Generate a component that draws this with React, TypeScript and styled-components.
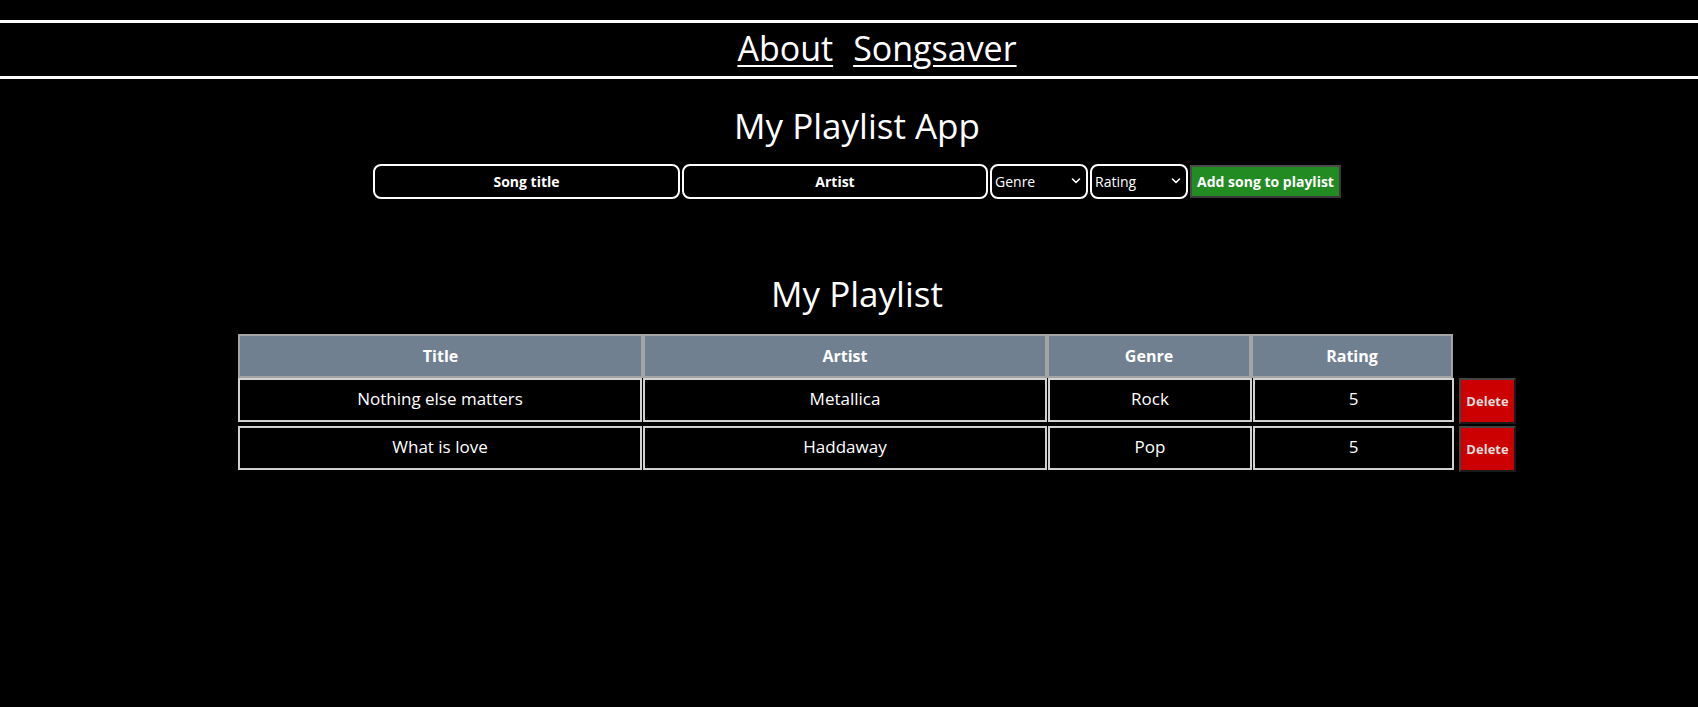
import React from "react";
import styled, { createGlobalStyle } from "styled-components";

const Global = createGlobalStyle`
  html, body { margin: 0; padding: 0; background: #000; }
  body { font-family: "Open Sans", "DejaVu Sans", sans-serif; color: #fff; }
  * { box-sizing: border-box; }
`;

const Page = styled.div`
  min-height: 707px;
  background: #000;
  padding-top: 20px;
  display: flex;
  flex-direction: column;
`;

const Nav = styled.nav`
  border-top: 3px solid #fff;
  border-bottom: 3px solid #fff;
  height: 59px;
  display: flex;
  justify-content: center;
  align-items: center;
  gap: 20px;
  padding-left: 56px;
  padding-bottom: 4px;
`;

const NavLink = styled.a`
  color: #fff;
  font-size: 34px;
  line-height: 40px;
  text-decoration: underline;
  text-decoration-thickness: 2px;
  text-underline-offset: 4px;
`;

const Heading = styled.h1<{ $top: number }>`
  margin: ${(p) => p.$top}px 0 0;
  padding-left: 16px;
  text-align: center;
  font-size: 35px;
  font-weight: 400;
  line-height: 40px;
`;

const Form = styled.form`
  margin-top: 18px;
  display: flex;
  justify-content: center;
  gap: 2px;
  padding-left: 16px;
`;

const TextInput = styled.input<{ $w: number }>`
  width: ${(p) => p.$w}px;
  height: 35px;
  border: 2px solid #fff;
  border-radius: 8px;
  background: #000;
  color: #fff;
  text-align: center;
  font-family: inherit;
  font-size: 14px;
  font-weight: 700;
  outline: none;
  &::placeholder { color: #fff; opacity: 1; }
`;

const SelectWrap = styled.div`
  position: relative;
  width: 98px;
  height: 35px;
`;

const Select = styled.select`
  appearance: none;
  width: 100%;
  height: 100%;
  border: 2px solid #fff;
  border-radius: 8px;
  background: #000;
  color: #fff;
  font-family: inherit;
  font-size: 14px;
  padding: 0 0 0 3px;
  outline: none;
`;

const Chevron = styled.svg`
  position: absolute;
  right: 7px;
  top: 13px;
  width: 10px;
  height: 8px;
  pointer-events: none;
`;

const AddButton = styled.button`
  width: 151px;
  height: 33px;
  margin-top: 1px;
  background: #228b22;
  color: #fff;
  border: 2px solid;
  border-color: #4a4a4a #3a3a3a #3a3a3a #4a4a4a;
  font-family: inherit;
  font-size: 14px;
  font-weight: 700;
  padding: 0;
`;

const TableWrap = styled.div`
  margin-top: 20px;
  display: flex;
  justify-content: center;
  padding-left: 56px;
`;

const Table = styled.div`
  display: flex;
  flex-direction: column;
`;

const Row = styled.div<{ $gap?: number }>`
  display: flex;
  align-items: flex-start;
  margin-top: ${(p) => p.$gap ?? 0}px;
`;

const HeadCell = styled.div<{ $w: number }>`
  width: ${(p) => p.$w}px;
  height: 44px;
  background: #708090;
  border: 2px solid #a4a4a4;
  display: flex;
  align-items: center;
  justify-content: center;
  font-size: 16px;
  font-weight: 700;
`;

const Cell = styled.div<{ $w: number }>`
  width: ${(p) => p.$w}px;
  height: 44px;
  border: 2px solid #d0d0d0;
  margin-right: 1px;
  display: flex;
  align-items: center;
  justify-content: center;
  font-size: 17px;
  padding-bottom: 3px;
`;

const Spacer = styled.div`
  width: 62px;
`;

const DeleteButton = styled.button`
  margin-left: 4px;
  width: 57px;
  height: 46px;
  background: #cc0000;
  color: #dcdcdc;
  border: 2px solid;
  border-color: #444 #1a1a1a #1a1a1a #444;
  font-family: inherit;
  font-size: 13px;
  font-weight: 700;
  padding: 0;
`;

const cols = [404, 404, 204, 202];
const songs = [
  { title: "Nothing else matters", artist: "Metallica", genre: "Rock", rating: 5 },
  { title: "What is love", artist: "Haddaway", genre: "Pop", rating: 5 },
];

const ChevronIcon = () => (
  <Chevron viewBox="0 0 10 8">
    <path d="M1.5 2 L5 5.5 L8.5 2" stroke="#fff" strokeWidth="1.6" fill="none" strokeLinecap="round" strokeLinejoin="round" />
  </Chevron>
);

export default function App() {
  return (
    <Page>
      <Global />
      <Nav>
        <NavLink href="#">About</NavLink>
        <NavLink href="#">Songsaver</NavLink>
      </Nav>
      <Heading $top={27}>My Playlist App</Heading>
      <Form onSubmit={(e) => e.preventDefault()}>
        <TextInput $w={307} placeholder="Song title" />
        <TextInput $w={306} placeholder="Artist" />
        <SelectWrap>
          <Select defaultValue="">
            <option value="">Genre</option>
            <option>Rock</option>
            <option>Pop</option>
          </Select>
          <ChevronIcon />
        </SelectWrap>
        <SelectWrap>
          <Select defaultValue="">
            <option value="">Rating</option>
            <option>1</option>
            <option>5</option>
          </Select>
          <ChevronIcon />
        </SelectWrap>
        <AddButton type="submit">Add song to playlist</AddButton>
      </Form>
      <Heading $top={75}>My Playlist</Heading>
      <TableWrap>
        <Table>
          <Row>
            <HeadCell $w={cols[0] + 1}>Title</HeadCell>
            <HeadCell $w={cols[1]}>Artist</HeadCell>
            <HeadCell $w={cols[2]}>Genre</HeadCell>
            <HeadCell $w={cols[3]}>Rating</HeadCell>
            <Spacer />
          </Row>
          {songs.map((s, i) => (
            <Row key={i} $gap={i === 0 ? 0 : 2}>
              <Cell $w={cols[0]}>{s.title}</Cell>
              <Cell $w={cols[1]}>{s.artist}</Cell>
              <Cell $w={cols[2]}>{s.genre}</Cell>
              <Cell $w={cols[3] - 1}>{s.rating}</Cell>
              <DeleteButton>Delete</DeleteButton>
            </Row>
          ))}
        </Table>
      </TableWrap>
    </Page>
  );
}
